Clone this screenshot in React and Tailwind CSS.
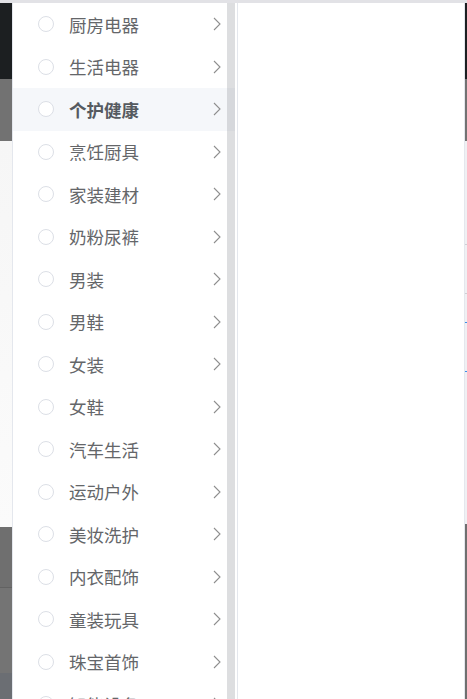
import React from "react";

const items = [
  "厨房电器","生活电器","个护健康","烹饪厨具","家装建材","奶粉尿裤","男装","男鞋","女装","女鞋","汽车生活","运动户外","美妆洗护","内衣配饰","童装玩具","珠宝首饰","智能设备",
];

function Chevron() {
  return (
    <svg width="8" height="14" viewBox="0 0 8 14" className="shrink-0">
      <polyline points="1,1 7,7 1,13" fill="none" stroke="#8e8e8e" strokeWidth="1.1" />
    </svg>
  );
}

export default function App() {
  return (
    <div className="w-[467px] h-[699px] overflow-hidden bg-white flex flex-col" style={{ fontFamily: '"Noto Sans CJK SC", "Noto Sans", sans-serif' }}>
      <div className="h-[3px] bg-[#e2e2e6] shrink-0" />
      <div className="flex flex-1 min-h-0">
        {/* left background strip */}
        <div className="w-[12px] flex flex-col shrink-0">
          <div className="h-[76px] bg-[#1c1f21]" />
          <div className="h-[62px] bg-[#727272]" />
          <div className="h-[386px] bg-gradient-to-b from-[#f6f6f6] to-[#fbfbfb]" />
          <div className="h-[60px] bg-[#6f6f6f]" />
          <div className="h-px bg-[#626262]" />
          <div className="h-[85px] bg-[#747474]" />
          <div className="flex-1 bg-[#6b6e73]" />
        </div>
        {/* panel */}
        <div className="flex flex-1 border-l border-r border-[#e4e7ed] bg-white min-w-0">
          <div className="relative w-[222px] shrink-0 overflow-hidden">
            <div>
              {items.map((t, i) => {
                const active = i === 2;
                return (
                  <div
                    key={t}
                    className={`h-[42.5px] flex items-center pl-[25px] pr-[14px] ${active ? "bg-[#f5f7fa]" : ""}`}
                  >
                    <span className="w-[16px] h-[16px] rounded-full border border-[#dcdfe6] bg-white shrink-0" />
                    <span className={`ml-[15px] flex-1 text-[17.5px] leading-none whitespace-nowrap ${active ? "font-bold text-[#555a60]" : "text-[#646669]"}`}>{t}</span>
                    <Chevron />
                  </div>
                );
              })}
            </div>
            <div className="absolute top-0 bottom-0 right-0 w-[8px] bg-[rgba(144,147,153,0.3)]" />
          </div>
          <div className="ml-[2px] flex-1 border-l border-[#e4e7ed]" />
        </div>
        {/* right background strip */}
        <div className="w-[2px] flex flex-col shrink-0">
          <div className="h-[76px] bg-[#1c1f21]" />
          <div className="h-[62px] bg-[#727272]" />
          <div className="h-[103px] bg-[#f0f0f3]" />
          <div className="h-px bg-[#cfcfd4]" />
          <div className="h-[48px] bg-[#f0f0f3]" />
          <div className="h-px bg-[#cfcfd4]" />
          <div className="h-[28px] bg-[#f0f0f3]" />
          <div className="h-px bg-[#3b8ee6]" />
          <div className="h-[48px] bg-[#f0f0f3]" />
          <div className="h-px bg-[#3b8ee6]" />
          <div className="h-[152px] bg-[#f0f0f3]" />
          <div className="flex-1 bg-[#6f6f6f]" />
        </div>
      </div>
    </div>
  );
}
